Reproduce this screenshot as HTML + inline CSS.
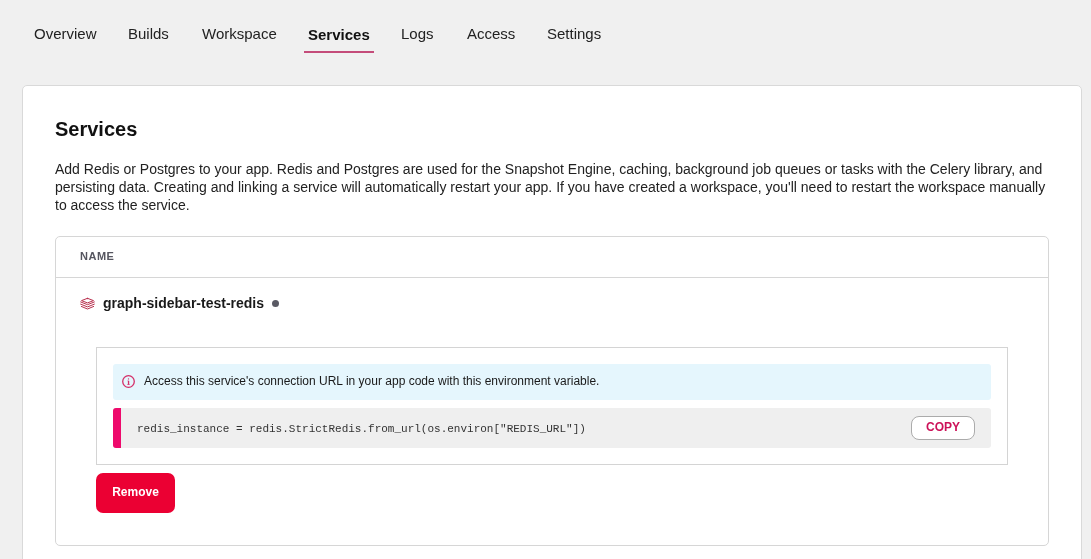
<!DOCTYPE html>
<html><head><meta charset="utf-8">
<style>
*{box-sizing:border-box;margin:0;padding:0}
html,body{width:1091px;height:559px;overflow:hidden}
.wrap{position:absolute;left:0;top:0;width:1091px;height:559px;will-change:transform}
body{background:#f0f0f0;font-family:"Liberation Sans",sans-serif;color:#1a1a1a;position:relative}
.tab{position:absolute;top:25px;font-size:15px;line-height:17px;color:#222}
.tab.active{font-weight:bold;top:26px;color:#111}
.uline{position:absolute;left:304px;top:51px;width:70px;height:2px;background:#c44c7a}
.card{position:absolute;left:22px;top:85px;width:1060px;height:520px;background:#fff;border:1px solid #d9d9d9;border-radius:5px}
h2{position:absolute;left:55px;top:118px;font-size:20px;line-height:22px;font-weight:bold;color:#111}
.desc{position:absolute;left:55px;top:160px;width:1000px;font-size:14px;line-height:18px;color:#222}
.tbl{position:absolute;left:55px;top:236px;width:994px;height:310px;border:1px solid #d6d6d6;border-radius:5px}
.th{position:absolute;left:80px;top:250px;font-size:11px;line-height:12px;font-weight:bold;letter-spacing:0.5px;color:#55555f}
.sep{position:absolute;left:56px;top:277px;width:992px;height:1px;background:#d6d6d6}
.svc{position:absolute;left:103px;top:295px;font-size:14px;line-height:16px;font-weight:bold;color:#1a1a1a}
.dot{position:absolute;left:272px;top:300px;width:7px;height:7px;border-radius:50%;background:#5a5a64}
.box{position:absolute;left:96px;top:347px;width:912px;height:118px;border:1px solid #d4d4d4}
.alert{position:absolute;left:113px;top:364px;width:878px;height:36px;background:#e5f6fd;border-radius:3px}
.alert span{position:absolute;left:31px;top:10px;font-size:12px;line-height:14px;color:#1a1a1a}
.code{position:absolute;left:113px;top:408px;width:878px;height:40px;background:#efefef;border-radius:3px;overflow:hidden}
.code .bar{position:absolute;left:0;top:0;width:8px;height:40px;background:#ee0a6c}
.code pre{position:absolute;left:24px;top:14px;font-family:"Liberation Mono",monospace;font-size:11px;line-height:14px;color:#333}
.copy{position:absolute;left:911px;top:416px;width:64px;height:24px;border:1px solid #ababab;border-radius:8px;background:#fff;font-size:12px;font-weight:bold;color:#cc1259;text-align:center;line-height:21px}
.remove{position:absolute;left:96px;top:473px;width:79px;height:40px;background:#eb0033;border-radius:7px;color:#fff;font-size:12px;font-weight:bold;text-align:center;line-height:39px}
</style></head><body><div class="wrap">
<div class="tab" style="left:34px">Overview</div>
<div class="tab" style="left:128px">Builds</div>
<div class="tab" style="left:202px">Workspace</div>
<div class="tab active" style="left:308px">Services</div>
<div class="tab" style="left:401px">Logs</div>
<div class="tab" style="left:467px">Access</div>
<div class="tab" style="left:547px">Settings</div>
<div class="uline"></div>
<div class="card"></div>
<h2>Services</h2>
<div class="desc">Add Redis or Postgres to your app. Redis and Postgres are used for the Snapshot Engine, caching, background job queues or tasks with the Celery library, and persisting data. Creating and linking a service will automatically restart your app. If you have created a workspace, you'll need to restart the workspace manually to access the service.</div>
<div class="tbl"></div>
<div class="th">NAME</div>
<div class="sep"></div>
<svg style="position:absolute;left:79px;top:297px" width="17" height="14" viewBox="0 0 17 14"><g fill="none" stroke="#b93250" stroke-width="1"><path d="M8.5 1.3 L14.5 3.6 L8.5 5.9 L2.5 3.6 Z"/><path d="M1.3 4.8 L8.5 7.7 L15.7 4.8"/><path d="M1.3 7.0 L8.5 9.9 L15.7 7.0"/><path d="M2 9.3 L8.5 12 L15 9.3"/></g><circle cx="8.5" cy="1.5" r="0.8" fill="#b93250"/></svg>
<div class="svc">graph-sidebar-test-redis</div>
<div class="dot"></div>
<div class="box"></div>
<div class="alert"><span>Access this service's connection URL in your app code with this environment variable.</span></div>
<svg style="position:absolute;left:121px;top:374px" width="15" height="15" viewBox="0 0 15 15"><circle cx="7.5" cy="7.5" r="5.8" fill="none" stroke="#d42f68" stroke-width="1.3"/><rect x="6.9" y="6.9" width="1.3" height="3.7" fill="#d42f68"/><rect x="6.3" y="10" width="2.4" height="0.7" fill="#d42f68"/><rect x="6.5" y="6.6" width="1.2" height="0.6" fill="#d42f68"/><circle cx="7.5" cy="4.9" r="0.7" fill="#d42f68"/></svg>
<div class="code"><div class="bar"></div><pre>redis_instance = redis.StrictRedis.from_url(os.environ["REDIS_URL"])</pre></div>
<div class="copy">COPY</div>
<div class="remove">Remove</div>
</div></body></html>
